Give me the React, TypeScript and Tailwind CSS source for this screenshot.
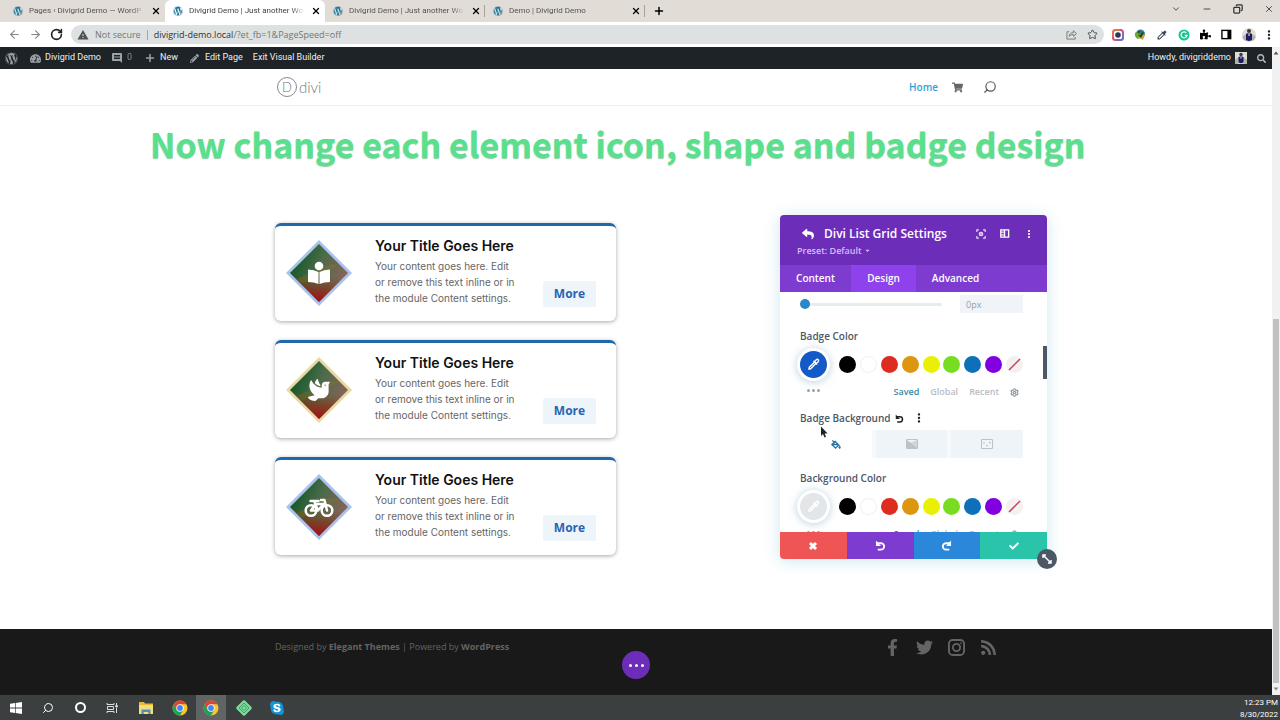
import type { ReactNode } from "react";
import clsx from "clsx";
import {
  FaCaretDown,
  FaCheck,
  FaDove,
  FaFacebookF,
  FaInstagram,
  FaPencilAlt,
  FaPuzzlePiece,
  FaReply,
  FaRss,
  FaSearch,
  FaShoppingCart,
  FaSkype,
  FaTachometerAlt,
  FaTwitter,
  FaWordpress,
} from "react-icons/fa";
import { MdColorize, MdInsertComment, MdMoreVert, MdWarning } from "react-icons/md";
import {
  ArrowLeft,
  ArrowRight,
  ChevronDown,
  Copy,
  Minus,
  Plus,
  RotateCw,
  Search,
  Settings,
  Star,
  X,
} from "lucide-react";

const browserTabs = [
  { title: "Pages ‹ Divigrid Demo — WordP", active: false },
  { title: "Divigrid Demo | Just another Wo", active: true },
  { title: "Divigrid Demo | Just another Wo", active: false },
  { title: "Demo | Divigrid Demo", active: false },
];

const swatches = [
  { name: "Black", className: "bg-black" },
  { name: "White", className: "bg-white ring-1 ring-inset ring-[#f0f0f0]" },
  { name: "Red", className: "bg-[#dd2c20]" },
  { name: "Orange", className: "bg-[#dc960f]" },
  { name: "Yellow", className: "bg-[#e9f005]" },
  { name: "Green", className: "bg-[#78dc22]" },
  { name: "Blue", className: "bg-[#0f70ba]" },
  { name: "Purple", className: "bg-[#8000e0]" },
];

function BrowserTab({ title, active }: { title: string; active: boolean }) {
  return (
    <div
      className={clsx(
        "flex h-full w-40 items-center gap-1.5 pr-1 pl-2",
        active ? "rounded-t-md bg-white text-[#3c3f41]" : "text-[#55534f]",
      )}
    >
      <FaWordpress className="size-2.5 shrink-0 text-[#1b769c]" />
      <button
        type="button"
        className="flex-1 mask-r-from-88% text-left font-['Roboto',sans-serif] text-[8px] whitespace-nowrap"
      >
        {title}
      </button>
      <button type="button" aria-label="Close tab" className="shrink-0">
        <X className="size-2.5 text-black" strokeWidth={3} />
      </button>
    </div>
  );
}

function Portrait({ className }: { className?: string }) {
  return (
    <svg viewBox="0 0 14 14" className={className} aria-hidden="true">
      <rect width="14" height="14" fill="#dcdfd6" />
      <path d="M0 9 4 6v8H0zM10 6l4 3v5h-4z" fill="#b2b59e" />
      <circle cx="7" cy="3" r="2" fill="#4a3430" />
      <path d="M4 6q3-2 6 0v6q-3 2-6 0z" fill="#1c1c68" />
      <path d="M6 5h2v3H6z" fill="#8885b8" />
    </svg>
  );
}

function BrowserChrome() {
  return (
    <div className="bg-white">
      <div className="flex h-[22px] items-center bg-[#e1dcd6] pr-1.5 pl-[5px]">
        {browserTabs.map((tab, index) => (
          <div key={index} className="flex h-full items-center">
            <BrowserTab {...tab} />
            {index > 1 && <span className="-ml-px h-3 w-px bg-[#a5a19b]" />}
          </div>
        ))}
        <button type="button" aria-label="New tab" className="ml-2">
          <Plus className="size-3 text-black" strokeWidth={3} />
        </button>
        <div className="ml-auto flex h-full items-start gap-[21px] pt-1 text-[#33312e]">
          <button type="button" aria-label="Search tabs">
            <ChevronDown className="size-2.5" />
          </button>
          <button type="button" aria-label="Minimize">
            <Minus className="size-2.5" />
          </button>
          <button type="button" aria-label="Restore">
            <Copy className="size-2.5 -scale-x-100" strokeWidth={3} />
          </button>
          <button type="button" aria-label="Close">
            <X className="size-2.5" />
          </button>
        </div>
      </div>
      <div className="flex h-[25px] items-center gap-2 pr-1 pl-2">
        <div className="flex items-center gap-2">
          <button type="button" aria-label="Back">
            <ArrowLeft className="size-[13px] text-[#88888a]" />
          </button>
          <button type="button" aria-label="Forward">
            <ArrowRight className="size-[13px] text-[#88888a]" />
          </button>
          <button type="button" aria-label="Reload">
            <RotateCw className="size-[13px] text-[#222]" strokeWidth={3} />
          </button>
        </div>
        <div className="flex h-[19px] min-w-0 flex-1 items-center gap-1.5 rounded-full bg-[#dee1e1] pr-1.5 pl-1.5 text-[9px] text-[#72766f]">
          <MdWarning className="size-3 shrink-0 text-[#4e5254]" />
          <span className="shrink-0">Not secure</span>
          <span className="h-2.5 w-px bg-[#a4a8a7]" />
          <span className="flex-1">
            <span className="text-[#30332f]">divigrid-demo.local</span>/?et_fb=1&amp;PageSpeed=off
          </span>
          <button type="button" aria-label="Share page" className="mr-1">
            <svg viewBox="0 0 12 12" className="size-[11px]" fill="none" stroke="currentColor">
              <path d="M3.500 3H1v8h9V8.500M3.500 8q0-4 4.500-4V2l3.500 3L8 8V6q-3 0-4.500 2z" />
            </svg>
          </button>
          <button type="button" aria-label="Bookmark">
            <Star className="size-[11px] text-[#404444]" />
          </button>
        </div>
        <div className="flex items-center gap-2.5">
          <svg viewBox="0 0 12 12" className="size-3" aria-hidden="true">
            <rect x="1" y="1" width="10" height="10" rx="2.5" fill="#fff" stroke="#cf4e8d" strokeWidth="2" />
            <path d="M1 8V3.500A2.500 2.500 0 0 1 3.500 1H8" fill="none" stroke="#e0813e" strokeWidth="1.500" />
            <path d="M11 5v3.500a2.500 2.500 0 0 1-2.500 2.500H5" fill="none" stroke="#5e72d8" strokeWidth="1.500" />
            <circle cx="6" cy="6" r="2.800" fill="#2a3a50" />
          </svg>
          <svg viewBox="0 0 12 12" className="size-3" aria-hidden="true">
            <circle cx="6.500" cy="5" r="4.500" fill="#3979a8" />
            <path d="M1 4q3-3 5-1l1 4-3 3Q0 8 1 4" fill="#6fa832" />
            <path d="m7 6 4-1-2 6-5-3z" fill="#de9f2b" />
            <path d="M3 3q2-2 4-1L5 5z" fill="#245b36" />
            <path d="m4 6 3 3 3-5-2-1-2 3z" fill="#1f4c2c" />
          </svg>
          <MdColorize className="size-3 text-[#3c4658]" />
          <svg viewBox="0 0 12 12" className="size-3" aria-hidden="true">
            <circle cx="6" cy="6" r="5.500" fill="#17c391" />
            <path d="M8.300 3.800A3 3 0 1 0 9 6.400H6.800" fill="none" stroke="#fff" strokeWidth="1.200" />
          </svg>
          <FaPuzzlePiece className="size-[11px] text-black" />
          <svg viewBox="0 0 12 12" className="size-[11px]" aria-hidden="true">
            <rect x="1" y="1.500" width="9.500" height="9" fill="none" stroke="#000" strokeWidth="1.500" />
            <path d="M7 1.500h4v9H7z" />
          </svg>
          <Portrait className="size-[14px] rounded-full" />
          <button type="button" aria-label="Browser menu" className="-ml-1">
            <MdMoreVert className="size-[14px] text-[#222]" />
          </button>
        </div>
      </div>
    </div>
  );
}

function AdminBar() {
  return (
    <nav className="flex h-[22px] items-center bg-[#1d2327] pr-1.5 pl-[5px] font-['Roboto',sans-serif] text-[9px] text-[#f0f0f1]">
      <a href="#about" aria-label="About WordPress">
        <FaWordpress className="size-[13px] text-[#9ca2a7]" />
      </a>
      <a href="#site" className="ml-3 flex items-center gap-1">
        <FaTachometerAlt className="size-[11px] text-[#9ca2a7]" />
        Divigrid Demo
      </a>
      <a href="#comments" className="ml-2.5 flex items-center gap-1 text-[#858b90]">
        <MdInsertComment className="size-3 text-[#9ca2a7]" />0
      </a>
      <a href="#new" className="ml-3 flex items-center gap-1">
        <Plus className="size-3 text-[#9ca2a7]" strokeWidth={3} />
        New
      </a>
      <a href="#edit" className="ml-3 flex items-center gap-1.5">
        <FaPencilAlt className="size-[9px] text-[#9ca2a7]" />
        Edit Page
      </a>
      <a href="#exit" className="ml-2.5">
        Exit Visual Builder
      </a>
      <a href="#profile" className="ml-auto flex items-center gap-1">
        Howdy, divigriddemo
        <Portrait className="size-3" />
      </a>
      <button type="button" aria-label="Search site" className="ml-2.5">
        <FaSearch className="size-[9px] text-[#b4b9bd]" />
      </button>
    </nav>
  );
}

function SiteHeader() {
  return (
    <header className="border-b border-[#f1f1f1] bg-white">
      <div className="mx-auto flex h-9 max-w-[722px] items-center">
        <a href="#home" className="ml-[2px] flex items-center gap-0.5 text-[#777]">
          <span className="flex size-5 items-center justify-center rounded-full border border-[#888] font-['Lato',sans-serif] text-[13px] leading-none font-light">
            D
          </span>
          <span className="font-['Lato',sans-serif] text-[15px] font-light">divi</span>
        </a>
        <a href="#home" className="ml-auto text-[10px] font-semibold text-[#2ea3d8]">
          Home
        </a>
        <a href="#cart" aria-label="Cart" className="ml-3.5">
          <FaShoppingCart className="size-[11px] text-[#666]" />
        </a>
        <button type="button" aria-label="Search" className="ml-5">
          <Search className="size-[14px] -scale-x-100 text-[#555]" />
        </button>
      </div>
    </header>
  );
}

function ReaderGlyph() {
  return (
    <g fill="#fff">
      <circle cx="33" cy="26" r="4.300" />
      <path d="M22 29.500q6 0 10.500 2.500v12Q28 42 22 42zM44 29.500q-6 0-10.500 2.500v12Q38 42 44 42z" />
    </g>
  );
}

function BikeGlyph() {
  return (
    <g fill="none" stroke="#fff" strokeLinecap="round" strokeLinejoin="round">
      <circle cx="25" cy="36.500" r="5.300" strokeWidth="2.500" />
      <circle cx="41" cy="36.500" r="5.300" strokeWidth="2.500" />
      <path d="M25 36.500 29.500 30h8L32 36.500zM32 36.500 28.500 28m-4-1h8M35 26h3.500L41 36.500" strokeWidth="2.500" />
    </g>
  );
}

function DiamondBadge({ id, border, children }: { id: string; border: string; children: ReactNode }) {
  return (
    <svg viewBox="0 0 66 66" className="size-[66px] shrink-0" aria-hidden="true">
      <defs>
        <linearGradient id={`${id}-base`} x1="0" y1="0.2" x2="1" y2="0.6">
          <stop offset="0" stopColor="#07551d" />
          <stop offset="0.500" stopColor="#4b6b4b" />
          <stop offset="1" stopColor="#8d625a" />
        </linearGradient>
        <linearGradient id={`${id}-shade`} x1="0.100" y1="0" x2="0" y2="1">
          <stop offset="0.500" stopColor="#7d3a1a" stopOpacity="0" />
          <stop offset="0.720" stopColor="#8c2a12" stopOpacity="0.650" />
          <stop offset="0.980" stopColor="#b00018" />
        </linearGradient>
      </defs>
      <path d="M33 0 66 33 33 66 0 33z" fill={border} />
      <path d="M33 4 62 33 33 62 4 33z" fill={`url(#${id}-base)`} />
      <path d="M33 4 62 33 33 62 4 33z" fill={`url(#${id}-shade)`} />
      <path d="m11 39 34-15 8 1-37 19z" fill="#9a7d20" opacity="0.250" />
      {children}
    </svg>
  );
}

function ListCard({ badge }: { badge: ReactNode }) {
  return (
    <article className="flex h-[98px] rounded-md border-t-[3px] border-[#1f68ab] bg-white pr-5 pl-[11px] shadow-[0_1px_4px_rgba(0,0,0,0.35)]">
      <div className="flex items-center pb-0.5">{badge}</div>
      <div className="ml-[23px] flex-1 pt-2.5 font-['Inter',sans-serif]">
        <h2 className="text-sm font-semibold whitespace-nowrap text-[#111]">Your Title Goes Here</h2>
        <p className="mt-0.5 text-[10px] leading-4 whitespace-nowrap text-[#666]">
          Your content goes here. Edit
          <br />
          or remove this text inline or in
          <br />
          the module Content settings.
        </p>
      </div>
      <a
        href="#more"
        className="mb-3.5 flex h-[26px] w-[53px] items-center justify-center self-end rounded-xs bg-[#edf4fa] text-xs font-bold text-[#2864b4]"
      >
        More
      </a>
    </article>
  );
}

function ColorRow({ label, picker }: { label: string; picker: string }) {
  return (
    <div className="flex h-9 items-center gap-3">
      <button
        type="button"
        aria-label={`Pick ${label}`}
        className={clsx(
          "flex size-[27px] shrink-0 items-center justify-center rounded-full text-white ring-3 ring-white drop-shadow-[0_1px_4px_rgba(120,160,190,0.5)]",
          picker,
        )}
      >
        <svg viewBox="0 0 16 16" className="size-[15px]" fill="none" stroke="currentColor" strokeWidth="1.500" strokeLinejoin="round">
          <path d="m9 5 2-2q1-1 2 0t0 2l-2 2zM8 4l4 4M9 5.500 3.500 11 3 13l2-.500L10.500 7" />
        </svg>
      </button>
      <div className="flex flex-1 items-center justify-between">
        {swatches.map((swatch) => (
          <button
            key={swatch.name}
            type="button"
            aria-label={`${label}: ${swatch.name}`}
            className={clsx("size-[17px] rounded-full", swatch.className)}
          />
        ))}
        <button
          type="button"
          aria-label={`${label}: none`}
          className="size-[17px] overflow-hidden rounded-full bg-[#f5efef]"
        >
          <svg viewBox="0 0 17 17">
            <path d="m3 14 11-11" stroke="#b8475c" strokeWidth="1.500" />
          </svg>
        </button>
      </div>
    </div>
  );
}

function PaletteLinks() {
  return (
    <div className="flex h-5 items-center gap-[11px] text-[9px] font-semibold text-[#b9bdc2]">
      <button type="button" aria-label="More colors" className="mr-auto mb-1 ml-[7px] flex gap-0.5">
        {[0, 1, 2].map((dot) => (
          <span key={dot} className="size-[3px] rounded-full bg-[#9aa4ad]" />
        ))}
      </button>
      <button type="button" className="text-[#3b8aa6]">
        Saved
      </button>
      <button type="button">Global</button>
      <button type="button">Recent</button>
      <button type="button" aria-label="Palette settings" className="mr-1">
        <Settings className="size-[9px] text-[#8f989f]" strokeWidth={3} />
      </button>
    </div>
  );
}

function TurnIcon({ className }: { className?: string }) {
  return (
    <svg viewBox="0 0 12 12" className={className} fill="none" aria-hidden="true">
      <path d="M2 3.500h4.500a3.500 3.500 0 1 1 0 7H3" stroke="currentColor" strokeWidth="2" />
      <path d="M1 .5v6h5.500z" fill="currentColor" />
    </svg>
  );
}

function SettingsPanel() {
  return (
    <aside className="relative -mr-[50px] w-[267px] shrink-0 self-start rounded-sm bg-white shadow-[0_2px_16px_rgba(60,160,190,0.25)]">
      <div className="h-[50px] rounded-t-sm bg-[#6c2eb9] pr-3 pl-[17px] text-white">
        <div className="flex h-[37px] items-center">
          <button type="button" aria-label="Back" className="mr-2.5 ml-[5px]">
            <FaReply className="size-3" />
          </button>
          <h2 className="text-xs font-semibold whitespace-nowrap">Divi List Grid Settings</h2>
          <div className="ml-auto flex items-center gap-[13px]">
            <button type="button" aria-label="Expand">
              <svg viewBox="0 0 12 12" className="size-2.5" fill="none" stroke="#e6d7f7" strokeWidth="1.400">
                <path d="M1 3.500V1h2.500M8.500 1H11v2.500M11 8.500V11H8.500M3.500 11H1V8.500" />
                <circle cx="6" cy="6" r="1.800" strokeWidth="2" />
              </svg>
            </button>
            <button type="button" aria-label="Dock panel">
              <svg viewBox="0 0 12 12" className="size-[11px]" fill="none" stroke="#fff" strokeWidth="1.500">
                <path d="M2 2h8.500v8H2zM6 2v8M3 4.500h2M3 7.500h2" />
              </svg>
            </button>
            <button type="button" aria-label="Module menu">
              <MdMoreVert className="size-3" />
            </button>
          </div>
        </div>
        <button type="button" className="-mt-2 flex items-center gap-0.5 text-[9px] font-semibold text-[#d5bdf1]">
          Preset: Default
          <FaCaretDown className="size-[7px]" />
        </button>
      </div>
      <div className="flex h-[27px] bg-[#7e3bd0] text-[10px] font-semibold text-white">
        <button type="button" className="w-[71px]">
          Content
        </button>
        <button type="button" className="w-[65px] bg-[#8f42ec]">
          Design
        </button>
        <button type="button" className="w-[79px]">
          Advanced
        </button>
      </div>
      <div className="relative h-[240px] overflow-hidden pr-6 pl-5 text-[10px] font-semibold text-[#4c5866]">
        <div className="flex h-6 items-center justify-between">
          <input
            type="range"
            aria-label="Badge spacing"
            defaultValue={0}
            className="h-[3px] w-[142px] appearance-none rounded-full bg-[#e6edf1] [&::-webkit-slider-thumb]:size-2.5 [&::-webkit-slider-thumb]:appearance-none [&::-webkit-slider-thumb]:rounded-full [&::-webkit-slider-thumb]:bg-[#2b87c9]"
          />
          <input
            type="text"
            aria-label="Badge spacing value"
            defaultValue="0px"
            className="h-[18px] w-[63px] bg-[#f0f4f8] px-1.5 text-[9px] font-normal text-[#969ca2]"
          />
        </div>
        <h3 className="mt-2.5 h-5 leading-5">Badge Color</h3>
        <ColorRow label="badge color" picker="bg-[#1359c8]" />
        <PaletteLinks />
        <div className="mt-1.5 flex h-5 items-center gap-1">
          <h3>Badge Background</h3>
          <button type="button" aria-label="Reset">
            <TurnIcon className="size-[9px] text-[#222]" />
          </button>
          <button type="button" aria-label="Background options" className="ml-1">
            <MdMoreVert className="size-3.5 text-[#222]" />
          </button>
        </div>
        <div className="mt-0.5 flex h-7 gap-1 bg-[#f6f9fb]">
          <button
            type="button"
            aria-label="Background fill"
            className="flex flex-1 items-center justify-center bg-white text-[#2675a5]"
          >
            <svg viewBox="0 0 12 12" className="size-[11px]" fill="none" stroke="currentColor" strokeWidth="1.400">
              <path d="m5.500 2.500 4 4-3.500 3.500-4-4zM2 6h7M5.500 4.500 2.500 1.500" />
              <path d="M10.500 7q2 3.500 0 3.500t0-3.500z" fill="currentColor" strokeWidth=".6" />
            </svg>
          </button>
          <button
            type="button"
            aria-label="Background gradient"
            className="flex flex-1 items-center justify-center bg-[#eff4f8] text-[#bdc2c6]"
          >
            <svg viewBox="0 0 12 10" className="h-2.5 w-3">
              <path d="M.5.500h11v9H.500z" fill="none" stroke="currentColor" />
              <path d="m1 1 10 8H1z" fill="currentColor" />
              <path d="M1 5 11 1v8H1z" fill="currentColor" opacity=".6" />
            </svg>
          </button>
          <button
            type="button"
            aria-label="Background image"
            className="flex flex-1 items-center justify-center bg-[#eff4f8] text-[#bdc2c6]"
          >
            <svg viewBox="0 0 12 10" className="h-2.5 w-3" fill="none" stroke="currentColor">
              <path d="M.5.500h11v9H.500zM3 3v2M5 6l1 1 1-1m1-3h1v2" />
            </svg>
          </button>
        </div>
        <h3 className="mt-2.5 h-5 leading-5">Background Color</h3>
        <ColorRow label="background color" picker="bg-[#e2e6e9]" />
        <PaletteLinks />
        <span className="absolute top-[54px] right-0 h-[33px] w-1 bg-[#4c5866]" />
      </div>
      <div className="flex h-[27px] overflow-hidden rounded-b-sm text-white [&>button]:flex [&>button]:flex-1 [&>button]:items-center [&>button]:justify-center">
        <button type="button" aria-label="Discard" className="bg-[#ef5555]">
          <X className="size-3" strokeWidth={6} strokeLinecap="butt" />
        </button>
        <button type="button" aria-label="Undo" className="bg-[#7d3bcf]">
          <TurnIcon className="size-[11px]" />
        </button>
        <button type="button" aria-label="Redo" className="bg-[#2b87da]">
          <TurnIcon className="size-[11px] -scale-x-100" />
        </button>
        <button type="button" aria-label="Save" className="bg-[#29c4a9]">
          <FaCheck className="size-[10px]" />
        </button>
      </div>
      <button
        type="button"
        aria-label="Resize"
        className="absolute -right-2.5 -bottom-2.5 flex size-5 items-center justify-center rounded-full bg-[#4c5866] text-white"
      >
        <svg viewBox="0 0 12 12" className="size-3" fill="none" stroke="currentColor" strokeWidth="1.500">
          <path d="m2 2 8 8M2 5V2h3M10 7v3H7" />
        </svg>
      </button>
      <svg viewBox="0 0 8 12" className="absolute top-[211px] left-10 h-3 w-2" aria-hidden="true">
        <path d="M1 .5v9.500l2-2 1.500 3.500 1.500-.7L4.600 7.500h3z" fill="#222" />
      </svg>
    </aside>
  );
}

function SiteFooter() {
  return (
    <footer className="relative h-[66px] bg-[#191919] text-[#646464]">
      <div className="mx-auto flex h-9 max-w-[722px] items-center justify-between">
        <p className="text-[9px]">
          Designed by{" "}
          <a href="#themes" className="font-bold">
            Elegant Themes
          </a>{" "}
          | Powered by{" "}
          <a href="#wordpress" className="font-bold">
            WordPress
          </a>
        </p>
        <div className="flex items-center gap-[15px]">
          <a href="#facebook" aria-label="Facebook">
            <FaFacebookF className="size-[17px]" />
          </a>
          <a href="#twitter" aria-label="Twitter">
            <FaTwitter className="size-[17px]" />
          </a>
          <a href="#instagram" aria-label="Instagram">
            <svg viewBox="0 0 18 18" className="size-[17px]" fill="none" stroke="currentColor" strokeWidth="2">
              <rect x="1" y="1" width="16" height="16" rx="4" />
              <circle cx="9" cy="9" r="3.800" />
              <path d="M13 4.500h1.200" />
            </svg>
          </a>
          <a href="#rss" aria-label="RSS">
            <FaRss className="size-[17px]" />
          </a>
        </div>
      </div>
      <button
        type="button"
        aria-label="Builder options"
        className="absolute top-[22px] left-1/2 flex size-7 -translate-x-1/2 items-center justify-center gap-[3px] rounded-full bg-[#6c2eb9]"
      >
        {[0, 1, 2].map((dot) => (
          <span key={dot} className="size-[3px] rounded-full bg-white" />
        ))}
      </button>
    </footer>
  );
}

function PageScrollbar() {
  return (
    <div className="flex w-2 shrink-0 flex-col items-center bg-[#f1f1f1]" aria-hidden="true">
      <svg viewBox="0 0 8 12" className="h-3 w-2">
        <path d="m4 4.500 2.500 3h-5z" fill="#505050" />
      </svg>
      <span className="grow-[260]" />
      <span className="w-1.5 grow-[365] bg-[#c1c1c1]" />
      <svg viewBox="0 0 8 12" className="h-3 w-2">
        <path d="M4 7.500 1.500 4.500h5z" fill="#8a8a8a" />
      </svg>
    </div>
  );
}

function ChromeLogo() {
  return (
    <svg viewBox="0 0 16 16" className="size-4" aria-hidden="true">
      <circle cx="8" cy="8" r="7.500" fill="#fbc52d" />
      <path d="M1.500 4.250A7.500 7.500 0 0 1 14.500 4.250H8L4.750 9.900z" fill="#dc4437" />
      <path d="M1.500 4.250A7.500 7.500 0 0 0 8 15.500l3.200-5.600H4.750z" fill="#22a05a" />
      <circle cx="8" cy="8" r="3.700" fill="#fff" />
      <circle cx="8" cy="8" r="2.900" fill="#4285f4" />
    </svg>
  );
}

function Taskbar() {
  return (
    <div className="flex h-[25px] items-center justify-between overflow-hidden bg-[#3b3f40] text-white">
      <div className="flex h-full items-center [&>button]:flex [&>button]:h-full [&>button]:items-center [&>button]:justify-center">
        <button type="button" aria-label="Start" className="w-8">
          <svg viewBox="0 0 12 12" className="size-3" fill="#fff">
            <path d="M0 1.700 5 1v4.600H0zM5.700.900 12 0v5.600H5.700zM0 6.400h5V11l-5-.700zM5.700 6.400H12V12l-6.300-.900z" />
          </svg>
        </button>
        <button type="button" aria-label="Search Windows" className="w-8">
          <Search className="size-3 -scale-x-100" />
        </button>
        <button type="button" aria-label="Cortana" className="w-8">
          <span className="size-[11px] rounded-full border-2 border-white" />
        </button>
        <button type="button" aria-label="Task view" className="w-8">
          <svg viewBox="0 0 12 12" className="size-3" fill="none" stroke="#ddd">
            <path d="M1 1v1.500h7V1M1 11V9.500h7V11M1.500 4.500h6v3h-6zM10.500 1v2M10.500 6v5" />
            <path d="M9.800 3.500h1.500V5H9.800z" fill="#fff" />
          </svg>
        </button>
        <button type="button" aria-label="File Explorer" className="w-9">
          <svg viewBox="0 0 16 14" className="h-3.5 w-4">
            <path d="M1 1h5l1 1.500h8V13H1z" fill="#e9b93a" />
            <path d="M1 4h14v9H1z" fill="#f6dc7c" />
            <path d="M3.500 13V8.500h9V13h-2.200v-2H5.700v2z" fill="#4a93b8" />
          </svg>
        </button>
        <button type="button" aria-label="Chrome" className="w-8">
          <ChromeLogo />
        </button>
        <button type="button" aria-label="Chrome, active window" className="w-[30px] bg-[#606465]">
          <ChromeLogo />
        </button>
        <button type="button" aria-label="Local" className="ml-0.5 w-8">
          <svg viewBox="0 0 16 16" className="size-4">
            <path d="M8 1.500 14.500 8 8 14.500 1.500 8z" fill="#7fdc9c" stroke="#7fdc9c" strokeWidth="2.500" strokeLinejoin="round" />
            <path d="m8 3 5 5-5 5-5-5zM8 5.500 10.500 8 8 10.500 5.500 8z" fill="none" stroke="#2f8a54" strokeWidth=".8" />
          </svg>
        </button>
        <button type="button" aria-label="Skype" className="w-[34px]">
          <span className="flex size-3 items-center justify-center rounded-full bg-white">
            <FaSkype className="size-4 shrink-0 text-[#0f94d4]" />
          </span>
        </button>
      </div>
      <div className="self-start pt-0.5 pr-0.5 text-right font-['Roboto',sans-serif] text-[8px] leading-3">
        <div>12:23 PM</div>
        <div>8/30/2022</div>
      </div>
    </div>
  );
}

export default function App() {
  return (
    <div className="flex min-h-screen flex-col bg-white font-['Open_Sans',sans-serif]">
      <BrowserChrome />
      <div className="flex flex-1">
        <div className="flex min-w-0 flex-1 flex-col">
          <AdminBar />
          <SiteHeader />
          <main className="flex-1">
            <h1 className="pt-2.5 pl-[150px] font-['Noto_Sans_CJK_SC',sans-serif] text-[34px] leading-14 font-bold whitespace-nowrap text-[#5ae08c] [text-shadow:0_1px_1px_rgba(40,150,90,0.5)]">
              Now change each element icon, shape and badge design
            </h1>
            <div className="mx-auto mt-[43px] flex max-w-[722px] justify-between pb-[60px]">
              <div className="mt-2 flex w-[341px] flex-col gap-[19px]">
                <ListCard
                  badge={
                    <DiamondBadge id="reader" border="#a9c3ea">
                      <ReaderGlyph />
                    </DiamondBadge>
                  }
                />
                <ListCard
                  badge={
                    <DiamondBadge id="dove" border="#e8d9a4">
                      <FaDove x="22" y="22" size={22} color="#fff" />
                    </DiamondBadge>
                  }
                />
                <ListCard
                  badge={
                    <DiamondBadge id="bike" border="#a9c3ea">
                      <BikeGlyph />
                    </DiamondBadge>
                  }
                />
              </div>
              <SettingsPanel />
            </div>
          </main>
          <SiteFooter />
        </div>
        <PageScrollbar />
      </div>
      <Taskbar />
    </div>
  );
}
